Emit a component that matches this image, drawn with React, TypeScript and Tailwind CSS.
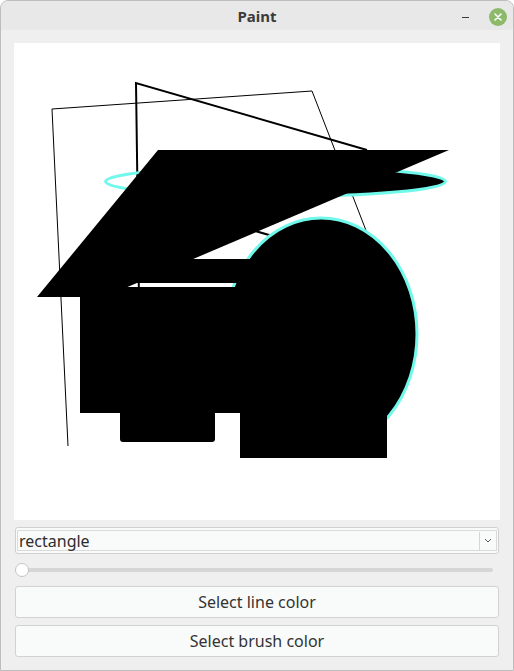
import React from "react";

const CYAN = "#70f8ea";

function arcPoints(cx: number, cy: number, rx: number, ry: number, a0: number, a1: number, n: number) {
  const pts: string[] = [];
  for (let i = 0; i <= n; i++) {
    const a = ((a0 + ((a1 - a0) * i) / n) * Math.PI) / 180;
    pts.push(`${(cx + rx * Math.cos(a)).toFixed(2)},${(cy + ry * Math.sin(a)).toFixed(2)}`);
  }
  return pts.join(" ");
}

function Canvas() {
  const rightFill = arcPoints(275.5, 181.5, 170, 15, -75, 75, 60);
  return (
    <svg
      width={486}
      height={477}
      viewBox="14 43 486 477"
      className="block"
    >
      <polyline
        points="68,446 52,109 312,91 367,233 385,300"
        fill="none"
        stroke="black"
        strokeWidth={1}
      />
      <polyline
        points="139,300 136,83 367,150"
        fill="none"
        stroke="black"
        strokeWidth={2}
      />
      <line x1={200} y1={215} x2={300} y2={244} stroke="black" strokeWidth={2} />
      <polygon points={rightFill} fill="#000000" />
      <ellipse cx={275.5} cy={181.5} rx={170} ry={15} fill="none" stroke={CYAN} strokeWidth={3} />
      <polygon points="158,150 449,150 104,297 37,297" fill="black" />
      <ellipse cx={321} cy={334} rx={96} ry={116} fill="black" stroke={CYAN} strokeWidth={3} />
      <rect x={100} y={259} width={200} height={24} fill="black" />
      <rect x={80} y={287} width={220} height={126} fill="black" />
      <rect x={120} y={380} width={95} height={62} rx={3} fill="black" />
      <rect x={240} y={380} width={147} height={78} fill="black" />
    </svg>
  );
}

export default function App() {
  return (
    <div
      className="w-[514px] h-[671px] border border-[#bdbdbd] rounded-t-[8px] overflow-hidden bg-[#efefef] flex flex-col"
      style={{ fontFamily: '"Noto Sans", "Open Sans", sans-serif' }}
    >
      <div className="h-[29px] bg-[#e8e8e8] grid grid-cols-[1fr_auto_1fr] items-center shrink-0">
        <div />
        <div className="text-[15px] font-bold text-[#3b3b3b] leading-none pt-[1px]">Paint</div>
        <div className="flex items-center justify-end pr-[6px] gap-[20px]">
          <div className="w-[7px] h-[1.5px] bg-[#3a3a3a] mt-[4px]" />
          <div className="w-[18px] h-[18px] rounded-full bg-[#8db96b] flex items-center justify-center mt-[2px]">
            <svg width="10" height="10" viewBox="0 0 10 10">
              <path d="M2 2 L8 8 M8 2 L2 8" stroke="white" strokeWidth="1.6" strokeLinecap="round" />
            </svg>
          </div>
        </div>
      </div>
      <div className="flex flex-col px-[13px] pt-[13px]">
        <div className="w-[486px] h-[477px] bg-white">
          <Canvas />
        </div>
        <div className="mt-[7px] mx-px h-[27px] border border-[#d0d0d0] rounded-[3px] bg-[#f9fafa] px-[1px] py-[2px]">
          <div className="h-full border border-[#dadada] flex items-center">
            <div className="flex-1 pl-[1px] text-[16px] text-[#2d2d2d] leading-none">rectangle</div>
            <div className="w-px h-[18px] bg-[#d6d6d6]" />
            <div className="w-[16px] flex items-center justify-center">
              <svg width="8" height="5" viewBox="0 0 8 5">
                <path d="M1 1 L4 4 L7 1" fill="none" stroke="#5a5a5a" strokeWidth="1" />
              </svg>
            </div>
          </div>
        </div>
        <div className="relative h-[32px] mx-px">
          <div className="absolute left-0 right-[6px] top-[14px] h-[4px] rounded-full bg-[#d6d6d6]" />
          <div className="absolute left-0 top-[9px] w-[14px] h-[14px] rounded-full bg-white border border-[#c4c4c4]" />
        </div>
        <button className="mx-px h-[32px] border border-[#d2d2d2] rounded-[3px] bg-[#f9fafa] text-[16px] text-[#333333] flex items-center justify-center">
          Select line color
        </button>
        <button className="mt-[7px] mx-px h-[32px] border border-[#d2d2d2] rounded-[3px] bg-[#f9fafa] text-[16px] text-[#333333] flex items-center justify-center">
          Select brush color
        </button>
      </div>
    </div>
  );
}
